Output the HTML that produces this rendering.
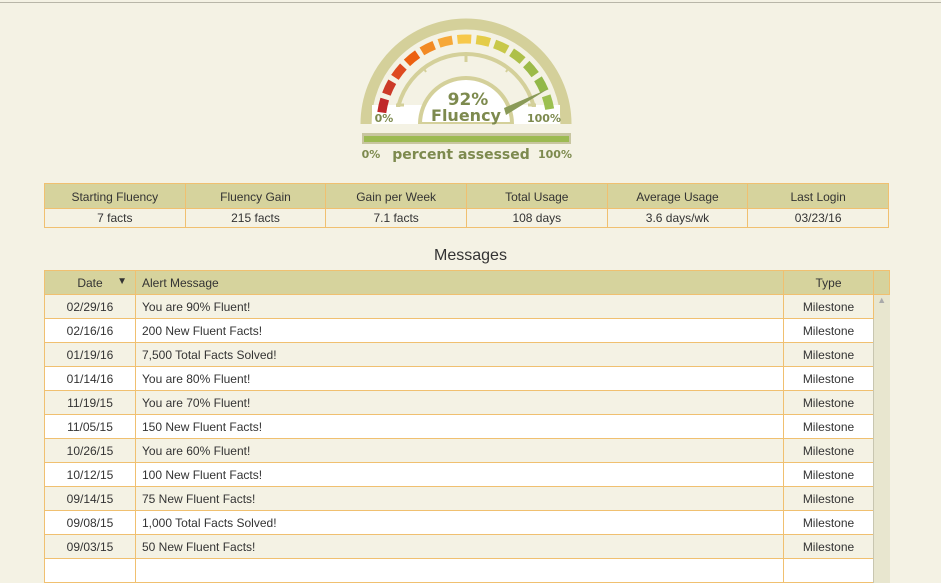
<!DOCTYPE html>
<html><head><style>
body{margin:0;width:941px;height:571px;overflow:hidden;background:#f4f2e4;font-family:"Liberation Sans",sans-serif;color:#333;position:relative}
.top{position:absolute;left:0;top:2px;width:941px;height:1px;background:#b8b6a8}
table{border-collapse:collapse;position:absolute;font-size:12px}
#sum{left:44px;top:183px;width:845px;table-layout:fixed}
#sum td{border:1px solid #f0c070;text-align:center;height:22px;padding:0}
#sum tr:first-child td{background:#d6d39d;height:23px;padding-top:1px}
#sum tr:last-child td{background:#f4f2e4;height:18px;padding-top:0}
.msg{position:absolute;left:0;width:941px;top:247px;text-align:center;font-size:16px;color:#333}
#m{left:44px;top:270px;width:845px;table-layout:fixed}
#m td{border:1px solid #f0c070;height:23px;padding:0 6px}
#m thead td{background:#d6d39d}
#m tbody tr:nth-child(odd) td{background:#f4f2e4}
#m tbody tr:nth-child(even) td{background:#fff}
.c{text-align:center}
#m tbody td.sb{background:#e8e6cf!important;border:none;border-left:1px solid #c8c6b0}
</style></head><body>
<div class="top"></div>
<svg style="position:absolute;left:0;top:0" width="941" height="175">
<path d="M366 124 A100 100 0 0 1 566 124" fill="none" stroke="#d4d09a" stroke-width="11"/>
<rect x="372" y="105" width="188" height="19" fill="#fff"/>
<g id="segs" fill="none" stroke-width="9"></g>
<path d="M396 124 A70 70 0 0 1 536 124" fill="none" stroke="#d4d09a" stroke-width="4"/>
<rect x="394" y="107" width="144" height="17" fill="#fff"/>
<line x1="396" y1="105" x2="404" y2="105" stroke="#d4d09a" stroke-width="3"/>
<line x1="528" y1="105" x2="536" y2="105" stroke="#d4d09a" stroke-width="3"/>
<line x1="466" y1="54" x2="466" y2="62" stroke="#d4d09a" stroke-width="3"/>
<line x1="423" y1="67" x2="426" y2="72" stroke="#d4d09a" stroke-width="2"/>
<line x1="509" y1="67" x2="506" y2="72" stroke="#d4d09a" stroke-width="2"/>
<path d="M420 124 A46 46 0 0 1 512 124 Z" fill="#fff" stroke="#d4d09a" stroke-width="4"/>
<rect x="366" y="124" width="200" height="2" fill="#f4f2e4"/>
<polygon points="504,108 548,89 506,115" fill="#8a9a58"/>
<text x="468" y="105" text-anchor="middle" font-family="DejaVu Sans" font-weight="bold" font-size="17" fill="#7d8a4e">92%</text>
<text x="466" y="121" text-anchor="middle" font-family="DejaVu Sans" font-weight="bold" font-size="16" fill="#7d8a4e">Fluency</text>
<text x="384" y="122" text-anchor="middle" font-family="DejaVu Sans" font-weight="bold" font-size="11" fill="#7d8a4e">0%</text>
<text x="544" y="122" text-anchor="middle" font-family="DejaVu Sans" font-weight="bold" font-size="11" fill="#7d8a4e">100%</text>
<rect x="362" y="133" width="209" height="11" fill="#c8c6a0"/>
<rect x="364" y="136" width="205" height="6" fill="#9cba52"/>
<text x="371" y="158" text-anchor="middle" font-family="DejaVu Sans" font-weight="bold" font-size="11" fill="#7d8a4e">0%</text>
<text x="461" y="159" text-anchor="middle" font-family="DejaVu Sans" font-weight="bold" font-size="14" fill="#7d8a4e">percent assessed</text>
<text x="555" y="158" text-anchor="middle" font-family="DejaVu Sans" font-weight="bold" font-size="11" fill="#7d8a4e">100%</text>
</svg>
<script>
var cols=["#c0282a","#cc3a28","#de4a20","#ec6010","#f28a24","#f6a838","#f7c84a","#e4cc48","#c8c84a","#aec04a","#9cba48","#92b848","#9cc050"];
var g=document.getElementById('segs'),n=13,s='';
var A0=Math.PI*0.96,A1=Math.PI*0.04,step=(A0-A1)/n;
for(var i=0;i<n;i++){var a0=A0-i*step-0.01,a1=A0-(i+1)*step+0.05;var r=85,cx=466,cy=124;
s+='<path d="M'+(cx+r*Math.cos(a0))+' '+(cy-r*Math.sin(a0))+' A'+r+' '+r+' 0 0 1 '+(cx+r*Math.cos(a1))+' '+(cy-r*Math.sin(a1))+'" stroke="'+cols[i]+'"/>';}
g.innerHTML=s;
</script>
<table id="sum"><tr><td>Starting Fluency</td><td>Fluency Gain</td><td>Gain per Week</td><td>Total Usage</td><td>Average Usage</td><td>Last Login</td></tr>
<tr><td>7 facts</td><td>215 facts</td><td>7.1 facts</td><td>108 days</td><td>3.6 days/wk</td><td>03/23/16</td></tr></table>
<div class="msg">Messages</div>
<table id="m"><colgroup><col style="width:91px"><col style="width:648px"><col style="width:90px"><col style="width:16px"></colgroup>
<thead><tr><td class="c" style="position:relative">Date<span style="position:absolute;right:8px;font-size:10px">▼</span></td><td>Alert Message</td><td class="c">Type</td><td></td></tr></thead>
<tbody>
<tr><td class="c">02/29/16</td><td>You are 90% Fluent!</td><td class="c">Milestone</td><td class="sb" rowspan="12" style="vertical-align:top;text-align:center;font-size:9px;color:#aaa;padding:0">▲</td></tr>
<tr><td class="c">02/16/16</td><td>200 New Fluent Facts!</td><td class="c">Milestone</td></tr>
<tr><td class="c">01/19/16</td><td>7,500 Total Facts Solved!</td><td class="c">Milestone</td></tr>
<tr><td class="c">01/14/16</td><td>You are 80% Fluent!</td><td class="c">Milestone</td></tr>
<tr><td class="c">11/19/15</td><td>You are 70% Fluent!</td><td class="c">Milestone</td></tr>
<tr><td class="c">11/05/15</td><td>150 New Fluent Facts!</td><td class="c">Milestone</td></tr>
<tr><td class="c">10/26/15</td><td>You are 60% Fluent!</td><td class="c">Milestone</td></tr>
<tr><td class="c">10/12/15</td><td>100 New Fluent Facts!</td><td class="c">Milestone</td></tr>
<tr><td class="c">09/14/15</td><td>75 New Fluent Facts!</td><td class="c">Milestone</td></tr>
<tr><td class="c">09/08/15</td><td>1,000 Total Facts Solved!</td><td class="c">Milestone</td></tr>
<tr><td class="c">09/03/15</td><td>50 New Fluent Facts!</td><td class="c">Milestone</td></tr>
<tr><td class="c"></td><td></td><td class="c"></td></tr>
</tbody></table>
</body></html>
